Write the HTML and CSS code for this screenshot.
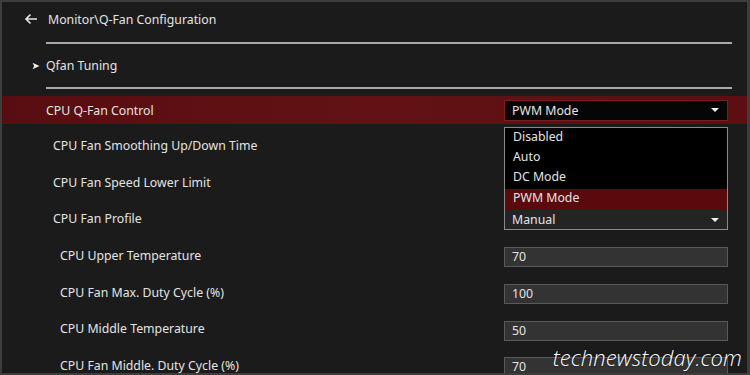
FILE: index.html
```html
<!DOCTYPE html>
<html lang="en">

<head>
    <meta charset="UTF-8">
    <meta name="viewport" content="width=device-width, initial-scale=1.0">
    <title>Monitor\Q-Fan Configuration</title>
    <link rel="stylesheet" href="styles.css">
</head>

<body>
    <div class="screen">
        <div class="header">
            <svg class="back" width="14" height="12" viewBox="0 0 14 12">
                <path d="M13 6H2M6.5 1.5L2 6l4.5 4.5" fill="none" stroke="#e6e6e6" stroke-width="1.6" />
            </svg>
            <div class="title">Monitor\Q-Fan Configuration</div>
        </div>

        <div class="rule top"></div>

        <div class="link">
            <svg class="chevron" width="8" height="8" viewBox="0 0 8 8">
                <path d="M0.5 0.8L7.5 4L0.5 7.2L2.2 4Z" fill="#f0f0f0" />
            </svg>
            <div>Qfan Tuning</div>
        </div>

        <div class="rule"></div>

        <div class="row selected">
            <div class="label">CPU Q-Fan Control</div>
            <div class="control">
                <div class="select open">
                    <span>PWM Mode</span>
                    <span class="caret"></span>
                </div>
                <!-- open option list -->
                <div class="menu">
                    <div class="option">Disabled</div>
                    <div class="option">Auto</div>
                    <div class="option">DC Mode</div>
                    <div class="option active">PWM Mode</div>
                </div>
            </div>
        </div>

        <div class="row sub">
            <div class="label">CPU Fan Smoothing Up/Down Time</div>
        </div>
        <div class="row sub">
            <div class="label">CPU Fan Speed Lower Limit</div>
        </div>
        <div class="row sub">
            <div class="label">CPU Fan Profile</div>
            <div class="control">
                <div class="select low">
                    <span>Manual</span>
                    <span class="caret"></span>
                </div>
            </div>
        </div>
        <div class="row subsub">
            <div class="label">CPU Upper Temperature</div>
            <div class="control"><div class="input">70</div></div>
        </div>
        <div class="row subsub">
            <div class="label">CPU Fan Max. Duty Cycle (%)</div>
            <div class="control"><div class="input">100</div></div>
        </div>
        <div class="row subsub">
            <div class="label">CPU Middle Temperature</div>
            <div class="control"><div class="input">50</div></div>
        </div>
        <div class="row subsub">
            <div class="label">CPU Fan Middle. Duty Cycle (%)</div>
            <div class="control"><div class="input">70</div></div>
        </div>

        <div class="watermark">technewstoday.com</div>
    </div>
</body>

</html>
```

FILE: styles.css
```css
body {
    margin: 0;
    background: #1b1b1b;
    font-family: 'Noto Sans', 'Open Sans', sans-serif;
    font-size: 12.3px;
    color: #e4e4e4;
    overflow: hidden;
}

.screen {
    position: relative;
    width: 750px;
    height: 375px;
    box-sizing: border-box;
    border: 2px solid #3d3d3d;
    border-right-width: 3px;
    background: #1b1b1b;
    overflow: hidden;
}

.header {
    display: flex;
    align-items: center;
    height: 34px;
    padding-left: 22px;
}

.back {
    margin-right: 10px;
}

.rule {
    height: 2px;
    margin: 0 15px 0 44px;
    background: #a8a8a8;
}

.rule.top {
    margin-top: 6px;
}

.link {
    display: flex;
    align-items: center;
    height: 43px;
    padding-left: 30px;
}

.chevron {
    margin-right: 6px;
}

.row {
    display: flex;
    align-items: center;
    justify-content: space-between;
    height: 36.7px;
    padding: 0 19px 0 44px;
}

.row.selected {
    height: 28px;
    margin: 7px 0 3px;
    background: linear-gradient(90deg, #580d10, #621215 50%, #5c0e11);
}

.row.sub {
    padding-left: 51px;
}

.row.subsub {
    padding-left: 58px;
}

.control {
    position: relative;
    width: 224px;
}

.select {
    display: flex;
    align-items: center;
    justify-content: space-between;
    height: 21px;
    box-sizing: border-box;
    padding: 0 8px 0 7px;
    border: 1px solid #8a8a8a;
    background: #242424;
}

.select.open {
    border-color: #7d1b1d;
    background: #060606;
}

.select.low {
    margin-top: 2px;
}

.caret {
    width: 0;
    height: 0;
    border-left: 4px solid transparent;
    border-right: 4px solid transparent;
    border-top: 4px solid #f2f2f2;
}

.menu {
    position: absolute;
    top: 27px;
    left: 0;
    right: 0;
    padding-top: 1px;
    border: 1px solid #8a8a8a;
    border-bottom: none;
    background: #000;
    z-index: 2;
}

.option {
    height: 20px;
    line-height: 15px;
    padding-left: 8px;
}

.option.active {
    height: 21px;
    line-height: 17px;
    background: #5a0a0c;
}

.input {
    height: 20px;
    margin-top: 4px;
    box-sizing: border-box;
    padding-left: 7px;
    line-height: 18px;
    border: 1px solid #595959;
    background: #333;
}

.watermark {
    position: absolute;
    right: 5px;
    bottom: 1px;
    font-family: 'Open Sans', sans-serif;
    font-style: italic;
    font-weight: 300;
    font-size: 22px;
    letter-spacing: 0.1px;
    color: #fff;
    text-shadow: 0 0 2px rgba(0, 0, 0, 0.6);
}
```
